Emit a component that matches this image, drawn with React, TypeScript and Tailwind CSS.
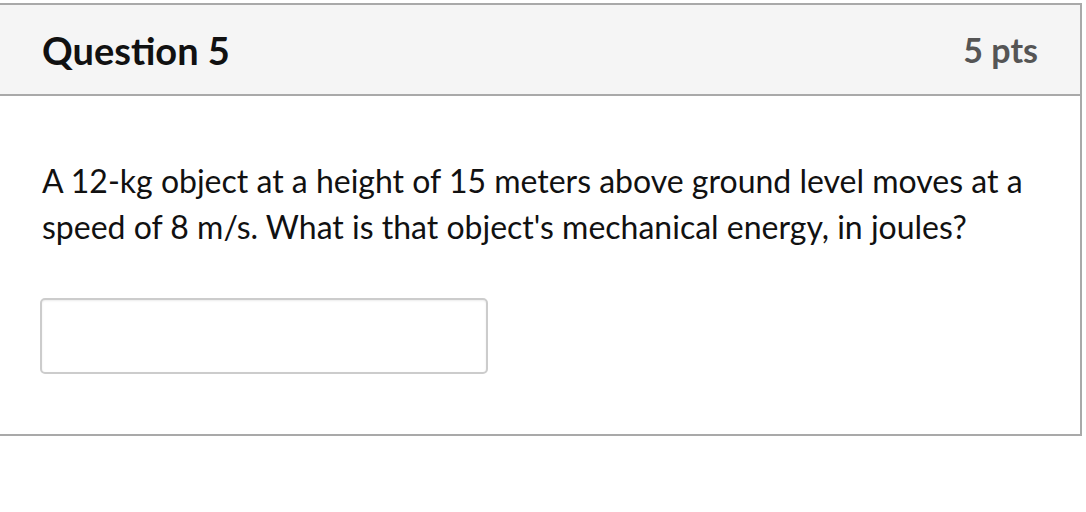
import React from "react";

export default function App() {
  return (
    <div
      className="w-[1086px] h-[512px] bg-white overflow-hidden"
      style={{ fontFamily: "Lato, 'Liberation Sans', sans-serif" }}
    >
      <div className="mt-[3px] w-[1082px] border-t-2 border-r-2 border-b-2 border-[#a9a9a9]">
        <div className="h-[91px] bg-[#f5f5f5] border-b-2 border-[#a9a9a9] flex items-center justify-between pl-[42px] pr-[42px]">
          <span className="text-[38px] font-bold text-[#111] leading-none">Question 5</span>
          <span className="text-[34px] font-bold text-[#555] leading-none">5 pts</span>
        </div>
        <div className="pl-[42px] pr-[42px] pt-[62px] pb-[60px]">
          <p className="text-[32px] leading-[46px] text-[#111]">
            A 12-kg object at a height of 15 meters above ground level moves at a speed of 8 m/s. What is that object's mechanical energy, in joules?
          </p>
          <div className="mt-[48px] ml-[-2px]">
            <input
              type="text"
              className="block w-[448px] h-[76px] rounded-[5px] border-2 border-[#cccccc] bg-white shadow-[inset_0_1px_2px_rgba(0,0,0,0.08)] outline-none"
            />
          </div>
        </div>
      </div>
    </div>
  );
}
